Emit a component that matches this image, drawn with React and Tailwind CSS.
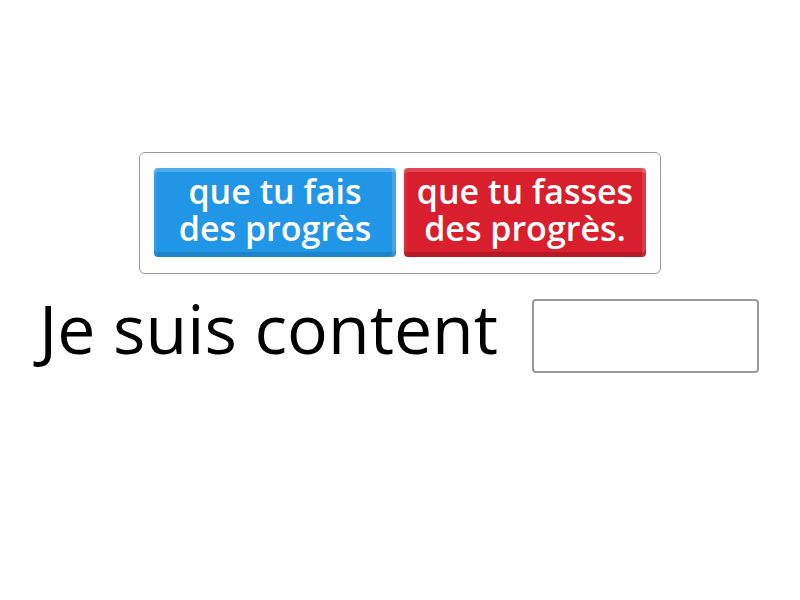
import React from "react";

const choices = [
  { id: 1, lines: ["que tu fais", "des progrès"], tone: "blue" },
  { id: 2, lines: ["que tu fasses", "des progrès."], tone: "red" },
];

// bevelled tiles: light top/sides, darker bottom edge
const toneClasses = {
  blue: "bg-[#2196e6] shadow-[inset_0_4px_0_rgba(255,255,255,0.2),inset_0_-5px_0_rgba(0,0,0,0.12),inset_-4px_0_0_rgba(255,255,255,0.15),inset_3px_0_0_rgba(255,255,255,0.08)]",
  red: "bg-[#d91e2e] shadow-[inset_0_4px_0_rgba(255,255,255,0.18),inset_0_-5px_0_rgba(0,0,0,0.16),inset_-4px_0_0_rgba(255,255,255,0.12),inset_3px_0_0_rgba(255,255,255,0.06)]",
};

const ChoiceTile = ({ lines, tone }) => (
  <div
    className={`w-[242px] h-[89px] rounded-[4px] flex flex-col items-center justify-center pb-[4px] text-white font-semibold text-[34px] leading-[37px] whitespace-nowrap ${toneClasses[tone]}`}
  >
    {lines.map((line) => (
      <span key={line}>{line}</span>
    ))}
  </div>
);

const App = () => {
  return (
    <div
      className="w-[800px] h-[600px] bg-white flex flex-col items-center pt-[152px]"
      style={{ fontFamily: '"Open Sans", sans-serif' }}
    >
      <div className="w-[522px] h-[122px] border border-[#9a9a9a] rounded-[6px] flex items-center justify-center gap-2 pb-[2px]">
        {choices.map((c) => (
          <ChoiceTile key={c.id} lines={c.lines} tone={c.tone} />
        ))}
      </div>

      <div className="flex items-center mt-[20px] w-[800px] pl-[39px]">
        <span className="text-[68px] leading-none text-black pb-[16px]">Je suis content</span>
        <div className="ml-[34px] w-[227px] h-[74px] border-2 border-[#9a9a9a] rounded-[4px] bg-white" />
      </div>
    </div>
  );
};

export default App;
